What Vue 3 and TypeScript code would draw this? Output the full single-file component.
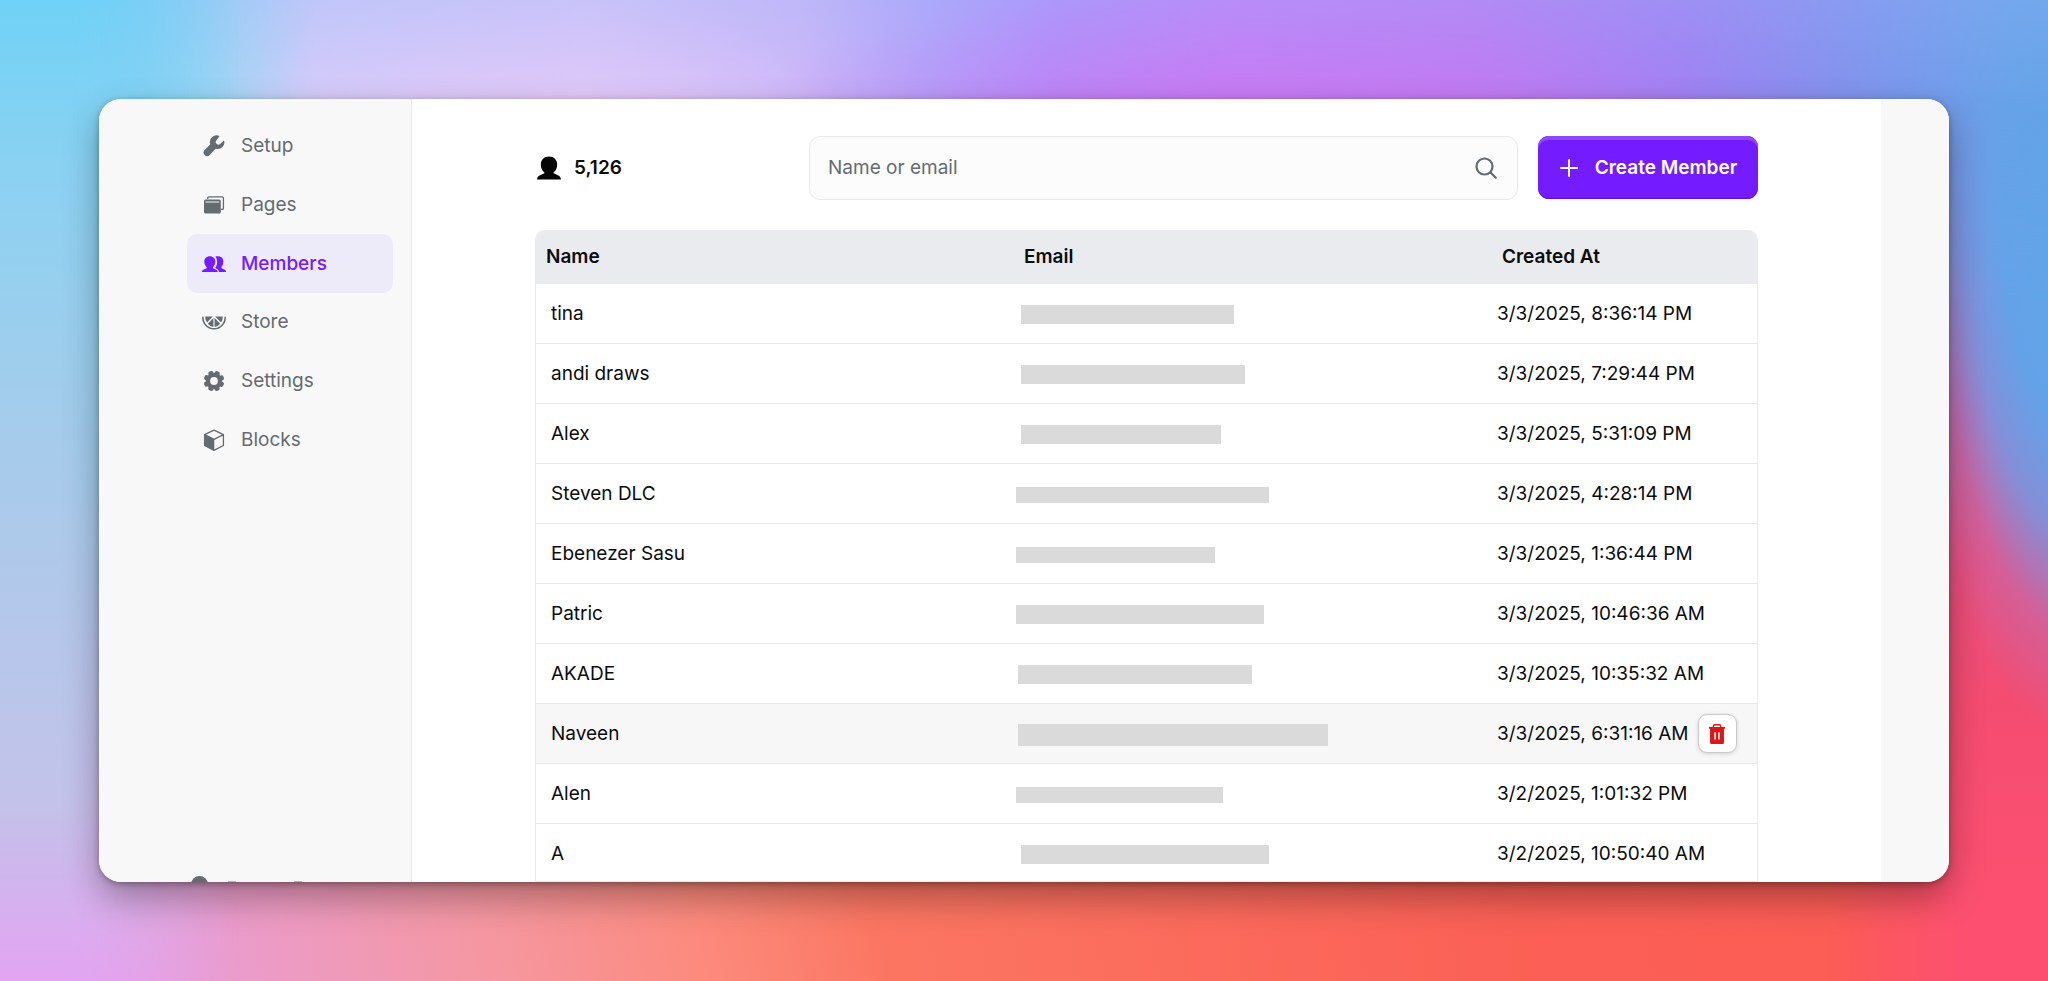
<script setup lang="ts">
import { ref } from 'vue'

type IconName = 'wrench' | 'pages' | 'members' | 'store' | 'gear' | 'cube'

interface NavItem {
  label: string
  icon: IconName
}

interface Member {
  name: string
  created: string
  bar: { inset: number; width: number; size: 'slim' | 'normal' | 'tall' }
}

const navItems: NavItem[] = [
  { label: 'Setup', icon: 'wrench' },
  { label: 'Pages', icon: 'pages' },
  { label: 'Members', icon: 'members' },
  { label: 'Store', icon: 'store' },
  { label: 'Settings', icon: 'gear' },
  { label: 'Blocks', icon: 'cube' },
]

const current = ref('Members')
const query = ref('')

const members: Member[] = [
  { name: 'tina', created: '3/3/2025, 8:36:14 PM', bar: { inset: 5, width: 213, size: 'normal' } },
  { name: 'andi draws', created: '3/3/2025, 7:29:44 PM', bar: { inset: 5, width: 224, size: 'normal' } },
  { name: 'Alex', created: '3/3/2025, 5:31:09 PM', bar: { inset: 5, width: 200, size: 'normal' } },
  { name: 'Steven DLC', created: '3/3/2025, 4:28:14 PM', bar: { inset: 0, width: 253, size: 'slim' } },
  { name: 'Ebenezer Sasu', created: '3/3/2025, 1:36:44 PM', bar: { inset: 0, width: 199, size: 'slim' } },
  { name: 'Patric', created: '3/3/2025, 10:46:36 AM', bar: { inset: 0, width: 248, size: 'normal' } },
  { name: 'AKADE', created: '3/3/2025, 10:35:32 AM', bar: { inset: 2, width: 234, size: 'normal' } },
  { name: 'Naveen', created: '3/3/2025, 6:31:16 AM', bar: { inset: 2, width: 310, size: 'tall' } },
  { name: 'Alen', created: '3/2/2025, 1:01:32 PM', bar: { inset: 0, width: 207, size: 'slim' } },
  { name: 'A', created: '3/2/2025, 10:50:40 AM', bar: { inset: 5, width: 248, size: 'normal' } },
]

const hovered = ref('Naveen')
</script>

<template>
  <div class="page">
    <div class="glow glow-bottom"></div>
    <div class="glow glow-left"></div>
    <div class="glow glow-right"></div>

    <div class="window">
      <aside class="sidebar">
        <nav class="nav" aria-label="Main">
          <a
            v-for="item in navItems"
            :key="item.label"
            href="#"
            class="nav-item"
            :class="{ active: item.label === current }"
            @click.prevent="current = item.label"
          >
            <svg class="nav-icon" viewBox="0 0 24 24" aria-hidden="true">
              <path
                v-if="item.icon === 'wrench'"
                fill="currentColor"
                d="M17.6 2a6.700 6.700 0 0 0-9.300 8.300L2.700 16a3.500 3.500 0 0 0 5 5l6-6.300a6.600 6.600 0 0 0 8.300-8.400l-3.800 3.700a2.700 2.700 0 0 1-3.800-3.800z"
              />
              <g v-else-if="item.icon === 'pages'">
                <path
                  fill="none"
                  stroke="currentColor"
                  stroke-width="1.300"
                  d="M5.700 6V5a1.200 1.200 0 0 1 1.200-1.200h13.300a1.200 1.200 0 0 1 1.200 1.200v10.200a1.200 1.200 0 0 1-1.200 1.200h-1.300"
                />
                <rect x="2" y="6.600" width="16.800" height="14" rx="1.500" fill="currentColor" />
                <path stroke="#f8f8f8" stroke-width="1" d="M3.500 9h13.800" />
              </g>
              <g v-else-if="item.icon === 'members'" fill="currentColor">
                <path
                  d="M7.800 4.200c3.300 0 5.500 2.300 5.500 5.400 0 2.500-1 4.400-2.300 5.500v1.200l3.300 1.500c.9.400 1.300 1.200 1.300 2.200H0c0-1 .4-1.800 1.300-2.200l3.300-1.500v-1.200C3.300 14 2.300 12.100 2.300 9.600c0-3.100 2.200-5.400 5.500-5.400z"
                />
                <path
                  d="M13.400 4.600c.8-.3 1.700-.4 2.600-.4 3.300 0 5.300 2.200 5.300 5.200 0 2.500-.6 4-1.800 5.300v1.600l3.200 1.500c.9.400 1.300 1.200 1.300 2.200h-7.100c0-1.400-.8-2.500-2-3l-1.700-.9c1.200-1.600 1.900-3.700 1.900-6 0-2.200-.6-4-1.700-5.500z"
                />
              </g>
              <g v-else-if="item.icon === 'store'">
                <path
                  fill="none"
                  stroke="currentColor"
                  stroke-width="1.500"
                  stroke-linecap="round"
                  d="M.8 7.200C.8 13.800 5.800 18.800 12 18.800s11.200-5 11.200-11.600"
                />
                <path
                  fill="currentColor"
                  d="M3.200 6.500h7.600L5 12.400a9 9 0 0 1-1.800-5.900zM20.800 6.500h-7.600l5.800 5.900a9 9 0 0 0 1.800-5.900zM11.400 8v9a8.600 8.600 0 0 1-5.600-3.300zM12.600 8v9a8.600 8.600 0 0 0 5.600-3.300z"
                />
              </g>
              <g v-else-if="item.icon === 'gear'">
                <g fill="currentColor">
                  <circle cx="12" cy="12" r="8.200" />
                  <rect
                    v-for="n in 4"
                    :key="n"
                    x="9.400"
                    y="1.600"
                    width="5.200"
                    height="20.800"
                    rx="2"
                    :transform="`rotate(${n * 45 - 22} 12 12)`"
                  />
                </g>
                <circle cx="12" cy="12" r="3.900" fill="#f8f8f8" />
              </g>
              <g v-else>
                <path
                  fill="none"
                  stroke="currentColor"
                  stroke-width="1.300"
                  stroke-linejoin="round"
                  d="M12 2.100l9.400 4.500v10.900L12 22.300l-9.400-4.800V6.600zM2.600 6.600l9.400 4.700 9.400-4.700"
                />
                <path fill="currentColor" d="M2.300 6.800l10 4.500v11l-10-4.800z" />
              </g>
            </svg>
            <span>{{ item.label }}</span>
          </a>
        </nav>
        <div class="sidebar-foot" aria-hidden="true">
          <i class="foot-avatar"></i>
          <i class="foot-mark"></i>
          <i class="foot-mark later"></i>
        </div>
      </aside>

      <main class="content">
        <header class="toolbar">
          <div class="count">
            <svg class="count-icon" viewBox="0 0 24 24" aria-hidden="true">
              <path
                fill="#050505"
                d="M12 .5c4.800 0 8.200 3.400 8.200 8 0 3.600-1.400 6.300-3.600 7.900v.8l4.400 2c1.900.9 2.800 2.200 3 4.300H0c.2-2.100 1.100-3.400 3-4.300l4.400-2v-.8C5.200 14.800 3.800 12.100 3.800 8.500c0-4.600 3.400-8 8.200-8z"
              />
            </svg>
            <strong>5,126</strong>
          </div>

          <label class="search">
            <input v-model="query" type="text" placeholder="Name or email" aria-label="Name or email" />
            <svg class="search-icon" viewBox="0 0 24 24" aria-hidden="true">
              <g fill="none" stroke="#636a70" stroke-width="2.200" stroke-linecap="round">
                <circle cx="10.500" cy="10.500" r="8" />
                <path d="M16.500 16.500l5.300 5.300" />
              </g>
            </svg>
          </label>

          <button type="button" class="create">
            <svg class="plus-icon" viewBox="0 0 20 20" aria-hidden="true">
              <path stroke="#fff" stroke-width="2" stroke-linecap="round" d="M10 2v16M2 10h16" />
            </svg>
            <span>Create Member</span>
          </button>
        </header>

        <div class="table-wrap">
          <table>
            <thead>
              <tr>
                <th scope="col" class="col-name">Name</th>
                <th scope="col" class="col-email">Email</th>
                <th scope="col" class="col-date">Created At</th>
              </tr>
            </thead>
            <tbody>
              <tr v-for="m in members" :key="m.name" :class="{ hovered: m.name === hovered }">
                <td class="cell-name">{{ m.name }}</td>
                <td class="cell-email">
                  <div
                    class="redacted"
                    :class="m.bar.size"
                    :style="{ width: m.bar.width + 'px', marginLeft: m.bar.inset + 'px' }"
                  ></div>
                </td>
                <td class="cell-date">
                  <div class="date-row">
                    <span>{{ m.created }}</span>
                    <button v-if="m.name === hovered" type="button" class="delete" aria-label="Delete member">
                      <svg viewBox="0 0 20 24" aria-hidden="true">
                        <path
                          fill="none"
                          stroke="currentColor"
                          stroke-width="1.600"
                          d="M6 4.500V3.200A1.500 1.500 0 0 1 7.500 1.700h5A1.500 1.500 0 0 1 14 3.200v1.300"
                        />
                        <path
                          fill="currentColor"
                          fill-rule="evenodd"
                          d="M1 4.200h18v2h-1.300V22a1.200 1.200 0 0 1-1.200 1.200h-13A1.200 1.200 0 0 1 2.300 22V6.200H1zM7 10v8h1.700v-8zM11.300 10v8H13v-8z"
                        />
                      </svg>
                    </button>
                  </div>
                </td>
              </tr>
            </tbody>
          </table>
        </div>
      </main>
    </div>
  </div>
</template>

<style>
body {
  margin: 0;
}
</style>

<style scoped>
.page {
  position: relative;
  box-sizing: border-box;
  display: flex;
  height: 100vh;
  padding: 99px;
  overflow: hidden;
  font-family: Inter, 'Liberation Sans', sans-serif;
  font-size: 19px;
  line-height: 24px;
  color: #0b0c0d;
  background:
    linear-gradient(to bottom, rgba(150, 180, 250, 0.3), rgba(150, 180, 250, 0) 110px),
    radial-gradient(ellipse 480px 120px at 1230px 110px, rgba(206, 116, 240, 0.6), rgba(206, 116, 240, 0)),
    radial-gradient(ellipse 300px 110px at 540px 110px, rgba(228, 200, 248, 0.7), rgba(228, 200, 248, 0)),
    linear-gradient(
      94deg,
      #6fd2f6 0%,
      #80d3f4 6%,
      #a4d6f4 11%,
      #d4cdf9 15%,
      #dfc9f9 28%,
      #d0b8f8 38%,
      #b5a3fa 44%,
      #b68afa 50%,
      #c57cf8 58%,
      #be78f3 70%,
      #a07ff2 80%,
      #7f92ec 88%,
      #67a2e8 95%,
      #5fa3e6 100%
    );
}

.glow {
  position: absolute;
  inset: 0;
}

.glow-bottom {
  background: linear-gradient(
    80deg,
    #e0a8f2 0%,
    #ea9ccd 10%,
    #f597a2 22%,
    #fc8a7c 32%,
    #fb7662 40%,
    #fb6a5c 55%,
    #fb5f55 70%,
    #fc5c55 88%,
    #fe5070 98%
  );
  mask-image: linear-gradient(to bottom, transparent 45%, #000 80%);
}

.glow-left {
  background: linear-gradient(
    to bottom,
    #6fd2f6 0%,
    #8bd1f2 17%,
    #a0cdec 38%,
    #b2c8ea 60%,
    #c3c2ea 82%,
    #dcaaf0 96%,
    #e2a4f2 100%
  );
  mask-image: linear-gradient(to right, #000 0, #000 70px, transparent 240px);
}

.glow-right {
  background:
    radial-gradient(
      ellipse 180px 560px at 2080px 180px,
      #5fa6e6 0%,
      #64a2e8 45%,
      rgba(124, 148, 222, 0.9) 64%,
      rgba(190, 110, 176, 0.5) 82%,
      rgba(240, 77, 114, 0) 100%
    ),
    linear-gradient(
      to bottom,
      #67a0e8 0%,
      #6f9be6 18%,
      #8c90d8 30%,
      #c766a8 42%,
      #e84f80 56%,
      #f44c70 72%,
      #fd5070 92%,
      #fd5070 100%
    );
  mask-image: linear-gradient(to left, #000 0, #000 90px, transparent 220px),
    linear-gradient(to bottom, transparent 90px, #000 300px);
  mask-composite: intersect;
}

.window {
  position: relative;
  flex: 1;
  display: flex;
  min-width: 0;
  overflow: hidden;
  border-radius: 22px;
  background: #fff;
  box-shadow:
    0 2px 6px rgba(0, 0, 0, 0.3),
    0 16px 36px rgba(0, 0, 0, 0.32);
}

.sidebar {
  box-sizing: border-box;
  flex: none;
  display: flex;
  flex-direction: column;
  justify-content: space-between;
  width: 313px;
  padding: 18px 18px 0 88px;
  border-right: 1px solid #e9e9eb;
  background: #f8f8f8;
}

.nav {
  display: grid;
  grid-template-rows: repeat(6, 1fr);
  height: 352px;
}

.nav-item {
  display: flex;
  align-items: center;
  gap: 15px;
  padding: 0 15px;
  border-radius: 10px;
  color: #646b71;
  text-decoration: none;
}

.nav-item.active {
  background: #edeafa;
  color: #741bff;
  font-weight: 500;
}

.nav-icon {
  flex: none;
  width: 24px;
  height: 24px;
}

.sidebar-foot {
  display: flex;
  align-items: flex-start;
  gap: 20px;
  height: 6px;
  padding-left: 4px;
}

.foot-avatar {
  width: 17px;
  height: 17px;
  border-radius: 50%;
  background: #646b71;
}

.foot-mark {
  width: 8px;
  height: 1px;
  margin-top: 5px;
  background: #b3b7ba;
}

.foot-mark.later {
  margin-left: 38px;
}

.content {
  flex: 1;
  display: flex;
  flex-direction: column;
  gap: 30px;
  min-width: 0;
  padding: 37px 123px 0;
  border-right: 68px solid #f8f8f8;
}

.toolbar {
  flex: none;
  display: flex;
  align-items: flex-start;
  height: 64px;
}

.count {
  flex: none;
  box-sizing: border-box;
  display: flex;
  align-items: center;
  gap: 13px;
  width: 274px;
  height: 63px;
  padding-left: 2px;
}

.count strong {
  font-weight: 600;
}

.count-icon {
  width: 24px;
  height: 24px;
}

.search {
  flex: 1;
  box-sizing: border-box;
  display: flex;
  align-items: center;
  height: 64px;
  margin-right: 20px;
  padding: 0 19px 0 18px;
  border: 1px solid #e9e9eb;
  border-radius: 11px;
  background: #fcfcfc;
}

.search input {
  flex: 1;
  min-width: 0;
  padding: 0;
  border: 0;
  outline: 0;
  background: none;
  font: inherit;
  color: inherit;
}

.search input::placeholder {
  color: #646b71;
  opacity: 1;
}

.search-icon {
  flex: none;
  width: 24px;
  height: 24px;
}

.create {
  flex: none;
  display: flex;
  align-items: center;
  justify-content: center;
  gap: 16px;
  width: 220px;
  height: 63px;
  padding: 0;
  border: 0;
  border-radius: 11px;
  background: #741bff;
  box-shadow:
    inset 0 4px 0 #8d48fb,
    inset 0 -1px 0 #5f0be6;
  font: inherit;
  font-weight: 600;
  color: #fff;
  white-space: nowrap;
}

.plus-icon {
  width: 20px;
  height: 20px;
}

.table-wrap {
  border: 1px solid #e9eaee;
  border-top: 0;
  border-radius: 10px 10px 0 0;
  overflow: hidden;
}

table {
  width: 100%;
  border-collapse: separate;
  border-spacing: 0;
  table-layout: fixed;
}

th,
td {
  box-sizing: border-box;
  height: 60px;
  padding: 0;
  text-align: left;
  white-space: nowrap;
}

th {
  height: 54px;
  padding-left: 10px;
  background: #eaebef;
  font-weight: 600;
}

.col-name,
.col-email {
  width: 478px;
}

td {
  border-bottom: 1px solid #e9e9eb;
}

.cell-name {
  padding-left: 15px;
}

.cell-email {
  padding-left: 2px;
}

.cell-date {
  padding-left: 5px;
}

.hovered td {
  background: #f7f7f7;
}

.redacted {
  margin-top: 2px;
  height: 19px;
  background: #dadada;
}

.redacted.slim {
  height: 16px;
}

.redacted.tall {
  height: 22px;
}

.date-row {
  display: flex;
  align-items: center;
  gap: 9px;
}

.delete {
  display: flex;
  align-items: center;
  justify-content: center;
  width: 39px;
  height: 39px;
  padding: 0;
  border: 1px solid #c9c9cc;
  border-radius: 9px;
  background: #fff;
  box-shadow: 0 1px 4px rgba(0, 0, 0, 0.15);
  color: #dc1717;
}

.delete svg {
  width: 18px;
  height: 22px;
}
</style>
